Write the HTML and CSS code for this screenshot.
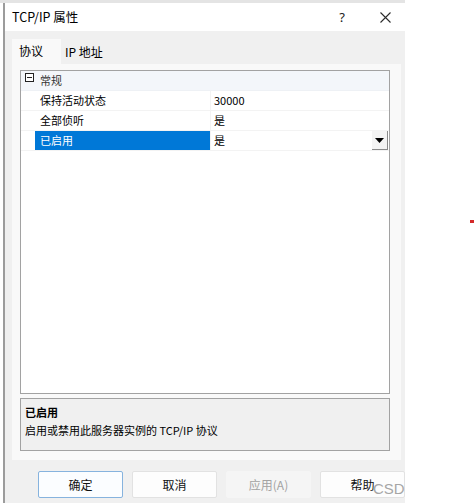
FILE: index.html
```html
<!DOCTYPE html>
<html>
<head>
<meta charset="utf-8">
<link rel="stylesheet" href="styles.css">
</head>
<body>
<div class="strip"></div>
<div class="window">
  <div class="titlebar">
    <span class="title">TCP/IP 属性</span>
    <span class="help">?</span>
    <span class="close"><svg width="11" height="11" viewBox="0 0 11 11"><path d="M0.5 0.5L10.5 10.5M10.5 0.5L0.5 10.5" stroke="#2b2b2b" stroke-width="1.1" fill="none"/></svg></span>
  </div>
  <div class="body">
    <div class="tabs">
      <div class="tab active">协议</div>
      <div class="tab">IP 地址</div>
    </div>
    <div class="panel">
      <div class="grid">
        <div class="row cat">
          <div class="margin"><span class="expander"><svg width="9" height="9" viewBox="0 0 9 9"><rect x="0.5" y="0.5" width="8" height="8" fill="#fff" stroke="#222"/><path d="M2 4.5H7" stroke="#222"/></svg></span></div>
          <div class="catlabel">常规</div>
        </div>
        <div class="row">
          <div class="margin"></div>
          <div class="label">保持活动状态</div>
          <div class="value">30000</div>
        </div>
        <div class="row">
          <div class="margin"></div>
          <div class="label">全部侦听</div>
          <div class="value">是</div>
        </div>
        <div class="row">
          <div class="margin"></div>
          <div class="label selected">已启用</div>
          <div class="value">是<span class="dropbtn"><svg width="9" height="5" viewBox="0 0 9 5"><path d="M0 0H9L4.5 5Z" fill="#000"/></svg></span></div>
        </div>
        <div class="gridfill"></div>
      </div>
      <div class="desc">
        <div class="desc-title">已启用</div>
        <div class="desc-text">启用或禁用此服务器实例的 TCP/IP 协议</div>
      </div>
    </div>
    <div class="buttons">
      <div class="btn default">确定</div>
      <div class="btn">取消</div>
      <div class="btn disabled">应用(A)</div>
      <div class="btn">帮助</div>
    </div>
  </div>
  <div class="watermark">CSDN</div>
</div>
<div class="reddot"></div>
</body>
</html>
```
FILE: styles.css
```css
html, body {
  margin: 0;
  padding: 0;
}
body {
  width: 474px;
  height: 503px;
  overflow: hidden;
  background: #fff;
  position: relative;
  font-family: "Noto Sans CJK SC", "Noto Sans", sans-serif;
  color: #000;
}
.strip {
  height: 3px;
  width: 405px;
  background: #e4e4e4;
}
.window {
  width: 400px;
  height: 500px;
  margin-left: 3px;
  border-left: 2px solid #9c9c9c;
  background: #f0f0f0;
  display: flex;
  flex-direction: column;
  position: relative;
  overflow: hidden;
}
.titlebar {
  height: 28px;
  background: #fff;
  display: flex;
  align-items: center;
  padding-left: 7px;
  flex-shrink: 0;
}
.title {
  font-size: 12.5px;
  flex: 1;
  line-height: 1;
}
.help {
  width: 46px;
  text-align: center;
  font-size: 13px;
  color: #222;
  font-family: "Noto Sans", sans-serif;
}
.close {
  width: 40px;
  display: flex;
  justify-content: center;
  align-items: center;
}
.body {
  flex: 1;
  padding: 8px 0 0 7px;
  display: flex;
  flex-direction: column;
}
.tabs {
  display: flex;
  height: 25px;
  align-items: flex-end;
}
.tab {
  font-size: 12px;
  height: 22px;
  line-height: 20px;
  padding: 0 0 0 4px;
  width: 43px;
}
.tab.active {
  height: 25px;
  line-height: 24px;
  width: 42px;
  padding-left: 7px;
  background: #f9f9f9;
}
.panel {
  width: 381px;
  height: 390px;
  background: #f9f9f9;
  padding: 6px 0 0 8px;
  display: flex;
  flex-direction: column;
  gap: 4px;
}
.grid {
  width: 368px;
  height: 322px;
  border: 1px solid #a2a2a2;
  background: #fff;
  display: flex;
  flex-direction: column;
}
.row {
  display: flex;
  height: 20px;
  font-size: 11px;
  line-height: 19px;
  border-bottom: 1px solid #f3f3f3;
  box-sizing: border-box;
}
.row.cat {
  background: #f3f6fa;
  border-bottom: 1px solid #eef1f5;
}
.margin {
  width: 14px;
  display: flex;
  justify-content: center;
  padding-top: 2px;
  box-sizing: border-box;
  align-items: flex-start;
}
.expander {
  display: block;
  height: 9px;
  margin-left: 2px;
}
.expander svg { display: block; }
.catlabel {
  padding-left: 5px;
  color: #333;
}
.label {
  width: 176px;
  padding-left: 5px;
  box-sizing: border-box;
  border-right: 1px solid #f3f3f3;
}
.label.selected {
  background: #0078d7;
  color: #fff;
}
.value {
  flex: 1;
  padding-left: 3px;
  position: relative;
}
.dropbtn {
  position: absolute;
  right: 1px;
  top: 0;
  width: 16px;
  height: 19px;
  background: #f4f4f4;
  border-right: 1px solid #8a8a8a;
  border-bottom: 1px solid #8a8a8a;
  box-sizing: border-box;
  display: flex;
  align-items: center;
  justify-content: center;
}
.dropbtn svg { display: block; }
.gridfill { flex: 1; }
.desc {
  box-sizing: border-box;
  height: 53px;
  width: 370px;
  border: 1px solid #a2a2a2;
  background: #f0f0f0;
  padding: 4px 4px;
  font-size: 11px;
}
.desc-title {
  font-weight: bold;
  line-height: 18px;
}
.desc-text {
  line-height: 18px;
}
.buttons {
  display: flex;
  gap: 9px;
  margin-top: 11px;
  padding-left: 26px;
}
.btn {
  flex-shrink: 0;
  width: 85px;
  height: 27px;
  box-sizing: border-box;
  border: 1px solid #e2e2e2;
  background: #fdfdfd;
  font-size: 12px;
  text-align: center;
  line-height: 25px;
  color: #111;
  border-radius: 2px;
}
.btn.default {
  border-color: #86b3de;
  background: #fbfdff;
}
.btn.disabled {
  background: #f5f5f5;
  border-color: #f5f5f5;
  color: #a3a3a3;
}
.watermark {
  position: absolute;
  left: 368px;
  top: 477px;
  font-family: "Liberation Sans", sans-serif;
  font-size: 15px;
  color: #a6a6a6;
}
.reddot {
  position: absolute;
  left: 470px;
  top: 220px;
  width: 4px;
  height: 3px;
  background: #d42a2a;
}
```
